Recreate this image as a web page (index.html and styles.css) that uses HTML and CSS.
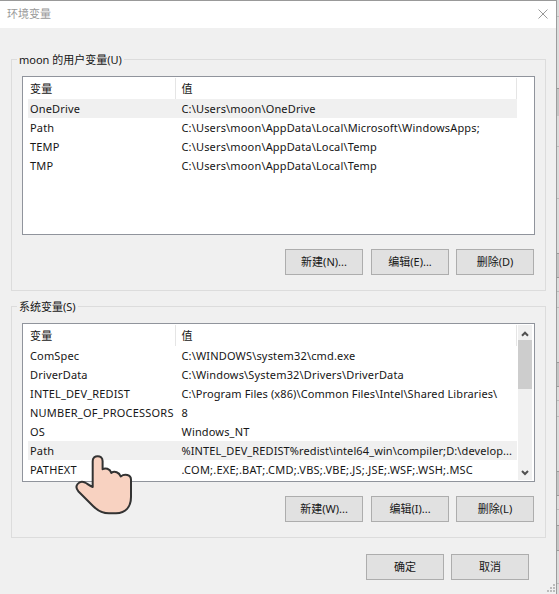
FILE: index.html
```html
<!DOCTYPE html>
<html lang="zh-CN">
<head>
<meta charset="utf-8">
<title>环境变量</title>
<link rel="stylesheet" href="styles.css">
</head>
<body>
<div class="desktop">
  <main class="window">
    <header class="titlebar">
      <h1>环境变量</h1>
      <svg class="close" width="10" height="10" viewBox="0 0 10 10"><path d="M.5 .5 9.5 9.5M9.5 .5 .5 9.5"/></svg>
    </header>

    <section class="group">
      <h2><span>moon 的用户变量(U)</span></h2>
      <div class="list">
        <div class="table">
          <div class="row head"><span>变量</span><span>值</span></div>
          <div class="row selected"><span>OneDrive</span><span>C:\Users\moon\OneDrive</span></div>
          <div class="row"><span>Path</span><span>C:\Users\moon\AppData\Local\Microsoft\WindowsApps;</span></div>
          <div class="row"><span>TEMP</span><span>C:\Users\moon\AppData\Local\Temp</span></div>
          <div class="row"><span>TMP</span><span>C:\Users\moon\AppData\Local\Temp</span></div>
        </div>
      </div>
      <div class="actions"><button>新建(N)...</button><button>编辑(E)...</button><button>删除(D)</button></div>
    </section>

    <section class="group">
      <h2><span>系统变量(S)</span></h2>
      <div class="list">
        <div class="table">
          <div class="row head"><span>变量</span><span>值</span></div>
          <div class="row"><span>ComSpec</span><span>C:\WINDOWS\system32\cmd.exe</span></div>
          <div class="row"><span>DriverData</span><span>C:\Windows\System32\Drivers\DriverData</span></div>
          <div class="row"><span>INTEL_DEV_REDIST</span><span class="tight">C:\Program Files (x86)\Common Files\Intel\Shared Libraries\</span></div>
          <div class="row"><span class="caps">NUMBER_OF_PROCESSORS</span><span>8</span></div>
          <div class="row"><span>OS</span><span>Windows_NT</span></div>
          <div class="row selected"><span>Path</span><span class="tight">%INTEL_DEV_REDIST%redist\intel64_win\compiler;D:\develop...</span></div>
          <div class="row"><span class="caps">PATHEXT</span><span class="caps">.COM;.EXE;.BAT;.CMD;.VBS;.VBE;.JS;.JSE;.WSF;.WSH;.MSC</span></div>
        </div>
        <div class="scrollbar">
          <svg width="14" height="15" viewBox="0 0 14 15"><path d="M4 10.7 7 7.7 10 10.7"/></svg>
          <div class="thumb"></div>
          <svg width="14" height="15" viewBox="0 0 14 15"><path d="M4 6 7 9 10 6"/></svg>
        </div>
      </div>
      <div class="actions"><button>新建(W)...</button><button>编辑(I)...</button><button>删除(L)</button></div>
    </section>

    <footer class="actions"><button>确定</button><button>取消</button></footer>
    <svg class="grip" width="8" height="8" viewBox="0 0 8 8"><path d="M6 0h2v2H6zM3 3h2v2H3zM6 3h2v2H6zM0 6h2v2H0zM3 6h2v2H3zM6 6h2v2H6z"/></svg>
  </main>
  <svg class="behind" width="3" height="594" viewBox="0 0 3 594">
    <path class="band" d="M1 88h2v28H1zM1 253h2v24H1zM1 362h2v24H1zM1 471h2v24H1zM1 525h2v25H1z"/>
    <path class="rule" d="M1 16.5h2M1 146.5h2M1 198.5h2M1 291.5h2M1 307.5h2M1 400.5h2M1 416.5h2M1 509.5h2M1 583.5h2"/>
    <path class="edge" d="M1 88.5h2M1 253.5h2M1 277.5h2M1 362.5h2M1 386.5h2M1 471.5h2M1 495.5h2M1 525.5h2M1 550.5h2M.5 0v594"/>
  </svg>
  <svg class="hand" width="58" height="62" viewBox="75 454 58 62"><path d="M92.7 487V461C92.7 454.5 102.6 454.5 102.6 461V469.3C105 467.5 110 468.5 111.3 473C114.5 470.5 119.3 472.3 120.7 476.5C124.5 473.5 131.2 474.5 131 480V497C131 507 125.5 512.8 116 513.3H109C101 513.3 97 510 93 506L78.5 491.5C73.5 486 79 480 85 482.5C88 484.2 90 486.2 92.7 487Z"/></svg>
</div>
</body>
</html>
```
FILE: styles.css
```css
* { box-sizing: border-box; }
body {
  margin: 0;
  font: 11px/19px "Noto Sans", "Noto Sans CJK SC", sans-serif;
  color: #161616;
}
.desktop {
  position: relative;
  display: flex;
  width: 559px;
  height: 594px;
  overflow: hidden;
}
.window {
  position: relative;
  width: 556px;
  height: 594px;
  background: #f0f0f0;
}
.titlebar {
  display: flex;
  align-items: center;
  justify-content: space-between;
  height: 28px;
  margin-bottom: 31px;
  padding: 0 8px 2px 7px;
  border-top: 1px solid #999;
  background: #fff;
}
h1, h2 { margin: 0; font-size: 11px; font-weight: 400; }
h1 { color: #999; }
.close { fill: none; stroke: #999; }
.group {
  width: 535px;
  height: 232px;
  margin: 0 0 15px 11px;
  padding: 0 10px;
  border: 1px solid #dcdcdc;
}
h2 {
  height: 16px;
  margin-left: -5px;
  line-height: 18px;
}
h2 span {
  display: inline-block;
  padding: 0 2px;
  background: #f0f0f0;
  transform: translateY(-9px);
}
.list {
  display: flex;
  width: 513px;
  height: 159px;
  padding: 1px 2px 1px 5px;
  border: 1px solid #90949c;
  background: #fff;
}
.table { width: 489px; }
.row {
  display: grid;
  grid-template-columns: 153px 1fr;
  height: 19px;
  letter-spacing: .16px;
  white-space: nowrap;
}
.row span { padding-left: 2px; }
.row span + span { padding-left: .5px; }
.row .tight { letter-spacing: .1px; }
.row .caps { letter-spacing: .22px; }
.head {
  grid-template-columns: 148px 1fr;
  height: 21px;
  border-right: 1px solid #e5e5e5;
  line-height: 21px;
}
.head span:first-child { border-right: 1px solid #e5e5e5; }
.head span + span { padding-left: 5.5px; }
.selected { background: #f0f0f0; }
.scrollbar {
  display: flex;
  flex-direction: column;
  width: 14px;
  margin-left: 1px;
  background: #f0f0f0;
}
.scrollbar svg { fill: none; stroke: #505050; stroke-width: 2; }
.scrollbar svg:last-child { margin-top: auto; }
.thumb { width: 14px; height: 49px; background: #cdcdcd; }
.actions {
  display: flex;
  justify-content: flex-end;
  gap: 8px;
  margin-top: 14px;
  padding-right: 1px;
}
button {
  width: 78px;
  height: 26px;
  padding: 0 0 2px;
  border: 1px solid #adadad;
  background: #e1e1e1;
  color: inherit;
  font: inherit;
}
.group button:last-child { margin-left: -1px; }
footer.actions { gap: 7px; margin-top: 16px; padding-right: 27px; }
.grip { position: absolute; right: 1px; bottom: 2px; fill: #bcbcbc; }
.behind { background: #dcdcdc; }
.band { fill: #c6c6c6; }
.rule { stroke: #bdbdbd; }
.edge { stroke: #9c9c9c; }
.hand {
  position: absolute;
  left: 75px;
  top: 454px;
  fill: #f8d2c1;
  stroke: #333;
  stroke-width: 2;
  stroke-linejoin: round;
}
```
